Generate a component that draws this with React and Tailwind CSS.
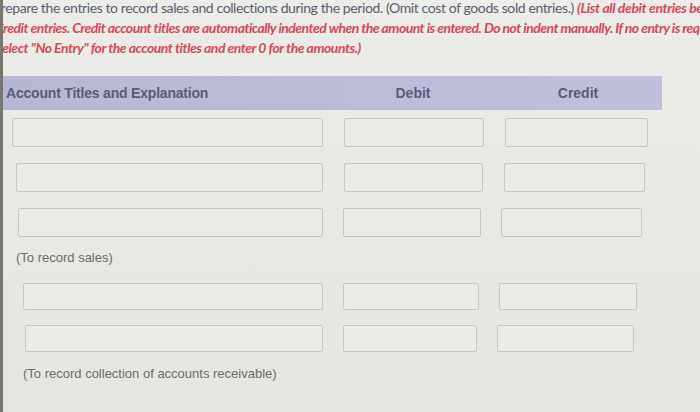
import React from 'react'

const ROWS_SALES = [
  { pl: 'pl-[9px]', acct: 'w-[311px]', debit: 'w-[140px]', credit: 'w-[143px]', gap: 'gap-[21px]', h: 'h-[29px]' },
  { pl: 'pl-[13px]', acct: 'w-[307px]', debit: 'w-[139px]', credit: 'w-[141px]', gap: 'gap-[21px]', h: 'h-[29px]' },
  { pl: 'pl-[15px]', acct: 'w-[305px]', debit: 'w-[138px]', credit: 'w-[141px]', gap: 'gap-[20px]', h: 'h-[29px]' },
]

const ROWS_COLLECTION = [
  { pl: 'pl-[20px]', acct: 'w-[300px]', debit: 'w-[136px]', credit: 'w-[138px]', gap: 'gap-[20px]', h: 'h-[27px]' },
  { pl: 'pl-[22px]', acct: 'w-[298px]', debit: 'w-[134px]', credit: 'w-[137px]', gap: 'gap-[20px]', h: 'h-[27px]' },
]

function Field({ w, h }) {
  return (
    <input
      type="text"
      className={`${w} ${h} shrink-0 rounded-[2px] border border-[#c6c6c3] bg-[#ebebe6] outline-none`}
    />
  )
}

function EntryRow({ row }) {
  return (
    <div className={`flex ${row.pl} ${row.gap}`}>
      <Field w={row.acct} h={row.h} />
      <Field w={row.debit} h={row.h} />
      <Field w={row.credit} h={row.h} />
    </div>
  )
}

export default function App() {
  return (
    <div className="relative h-[412px] w-[700px] overflow-hidden border-l-[3px] border-[#77776f] bg-gradient-to-b from-[#ecece8] to-[#e6e6e0] font-['Liberation_Sans',sans-serif]">
      {/* Instructions */}
      <div className="-mt-[2px] font-['Lato',sans-serif] text-[14px] leading-[20px] whitespace-nowrap">
        <div className="-ml-[10px] tracking-[-0.4px] text-[#5a6070]">
          Prepare the entries to record sales and collections during the period. (Omit cost of goods sold entries.){' '}
          <span className="font-bold italic text-[#d8485c]">(List all debit entries before</span>
        </div>
        <div className="-ml-[8px] font-bold italic tracking-[-0.55px] text-[#d8485c]">
          Credit entries. Credit account titles are automatically indented when the amount is entered. Do not indent manually. If no entry is required,
        </div>
        <div className="-ml-[6px] font-bold italic tracking-[-0.5px] text-[#d8485c]">
          select "No Entry" for the account titles and enter 0 for the amounts.)
        </div>
      </div>

      {/* Table header */}
      <div className="mt-[18px] flex h-[34px] w-[659px] items-center bg-gradient-to-r from-[#b7b7d4] to-[#c0c0dc] text-[14px] font-bold text-[#5c5c76]">
        <div className="w-[340px] pl-[3px] tracking-[-0.2px]">Account Titles and Explanation</div>
        <div className="w-[140px] text-center">Debit</div>
        <div className="w-[20px]" />
        <div className="w-[150px] text-center">Credit</div>
      </div>

      {/* Sales entry */}
      <div className="mt-[8px] flex flex-col gap-[16px]">
        {ROWS_SALES.map((r, i) => (
          <EntryRow key={i} row={r} />
        ))}
      </div>
      <div className="mt-[11px] pl-[13px] text-[13px] text-[#6c6c6c]">(To record sales)</div>

      {/* Collection entry */}
      <div className="mt-[15px] flex flex-col gap-[15px]">
        {ROWS_COLLECTION.map((r, i) => (
          <EntryRow key={i} row={r} />
        ))}
      </div>
      <div className="mt-[12px] pl-[20px] text-[13px] text-[#6c6c6c]">
        (To record collection of accounts receivable)
      </div>
    </div>
  )
}
